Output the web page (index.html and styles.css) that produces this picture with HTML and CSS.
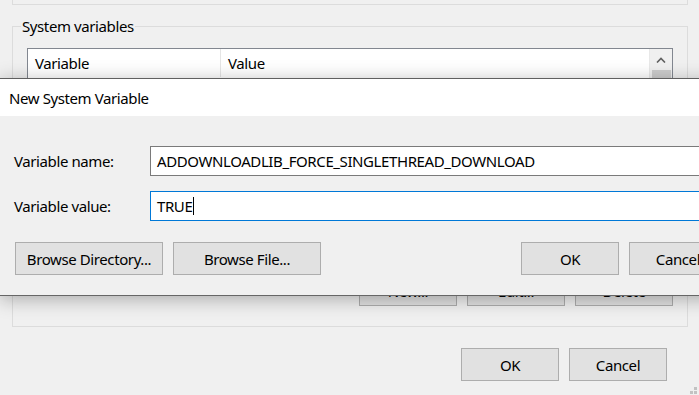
FILE: index.html
```html
<!DOCTYPE html>
<html>
<head>
<meta charset="utf-8">
<link rel="stylesheet" href="styles.css">
</head>
<body>
<div class="window">
  <div class="group-top"></div>
  <fieldset class="group">
    <legend class="group-label">System variables</legend>
    <div class="list">
      <div class="list-main">
        <div class="list-head">
          <div class="col col-var">Variable</div>
          <div class="col col-val">Value</div>
        </div>
      </div>
      <div class="scrollbar">
        <div class="scroll-up">
          <svg width="10" height="6" viewBox="0 0 10 6"><path d="M1 5.5 L5 1.5 L9 5.5" fill="none" stroke="#606060" stroke-width="1.6"/></svg>
        </div>
        <div class="scroll-thumb"></div>
      </div>
    </div>
    <div class="row-buttons">
      <div class="btn low">New...</div>
      <div class="btn low">Edit...</div>
      <div class="btn low">Delete</div>
    </div>
  </fieldset>
  <div class="row-buttons footer">
    <div class="btn">OK</div>
    <div class="btn">Cancel</div>
  </div>
  <svg class="grip" width="8" height="8" viewBox="0 0 8 8"><rect x="4" y="0" width="3" height="3" fill="#c2c2c2"/><rect x="0" y="4" width="3" height="3" fill="#c2c2c2"/><rect x="4" y="4" width="3" height="3" fill="#c2c2c2"/></svg>
</div>

<div class="dialog">
  <div class="dialog-title">New System Variable</div>
  <div class="dialog-body">
    <div class="form">
      <div class="label">Variable name:</div>
      <div class="field">ADDOWNLOADLIB_FORCE_SINGLETHREAD_DOWNLOAD</div>
      <div class="label">Variable value:</div>
      <div class="field focused">TRUE<span class="caret"></span></div>
    </div>
    <div class="dialog-buttons">
      <div class="btn wide">Browse Directory...</div>
      <div class="btn wide">Browse File...</div>
      <div class="spacer"></div>
      <div class="btn">OK</div>
      <div class="btn">Cancel</div>
    </div>
  </div>
</div>
</body>
</html>
```

FILE: styles.css
```css
html, body {
  margin: 0;
  padding: 0;
}
body {
  width: 699px;
  height: 395px;
  overflow: hidden;
  background: #f0f0f0;
  font-family: "Noto Sans", "Open Sans", sans-serif;
  font-size: 15px;
  letter-spacing: -0.4px;
  color: #000;
  position: relative;
}
.window {
  position: relative;
  height: 395px;
}
.group-top {
  height: 4px;
  margin: 0 11px 0 12px;
  border: 1px solid #dcdcdc;
  border-top: none;
}
.group {
  margin: 11px 11px 0 12px;
  border: 1px solid #dcdcdc;
  padding: 12px 14px 20px 14px;
  min-width: 0;
}
.group-label {
  margin-left: -6px;
  padding: 0 1px;
  line-height: 20px;
}
.list {
  display: flex;
  height: 212px;
  border: 1px solid #828790;
  background: #fff;
}
.list-main {
  flex: 1;
}
.list-head {
  display: flex;
  height: 28px;
}
.col {
  display: flex;
  align-items: center;
  padding-left: 7px;
}
.col-var {
  width: 185px;
  border-right: 1px solid #e5e5e5;
}
.scrollbar {
  width: 22px;
  border-left: 1px solid #e8e8e8;
  background: #f0f0f0;
  display: flex;
  flex-direction: column;
  align-items: center;
}
.scroll-up {
  height: 21px;
  width: 100%;
  display: flex;
  align-items: center;
  justify-content: center;
}
.scroll-thumb {
  width: 19px;
  height: 80px;
  background: #cdcdcd;
}
.row-buttons {
  display: flex;
  justify-content: flex-end;
  gap: 10px;
  margin-top: 11px;
}
.btn {
  width: 96px;
  height: 31px;
  border: 1px solid #adadad;
  background: #e1e1e1;
  display: flex;
  align-items: center;
  justify-content: center;
  white-space: nowrap;
  box-sizing: content-box;
}
.btn.low {
  height: 28px;
  padding-top: 3px;
}
.footer {
  margin-top: 21px;
  padding-right: 32px;
}
.grip {
  position: absolute;
  right: 1px;
  bottom: 0;
}
.dialog {
  position: absolute;
  top: 78px;
  left: 0;
  width: 745px;
  border-top: 1px solid #5f5f5f;
  border-bottom: 1px solid #666;
  box-shadow: 0 3px 18px rgba(0, 0, 0, 0.3);
  background: #f0f0f0;
}
.dialog-title {
  height: 37px;
  background: #fff;
  display: flex;
  align-items: center;
  padding-left: 9px;
}
.dialog-body {
  padding: 30px 18px 20px 14px;
}
.form {
  display: grid;
  grid-template-columns: 136px 577px;
  row-gap: 15px;
  align-items: center;
}
.field {
  height: 28px;
  border: 1px solid #7a7a7a;
  background: #fff;
  display: flex;
  align-items: center;
  padding-left: 6px;
}
.field.focused {
  border-color: #0078d7;
}
.caret {
  display: inline-block;
  width: 1px;
  height: 18px;
  background: #000;
  margin-left: 1px;
}
.dialog-buttons {
  display: flex;
  gap: 10px;
  margin-top: 21px;
  padding-left: 1px;
}
.btn.wide {
  width: 146px;
}
.spacer {
  flex: 1;
}
```
